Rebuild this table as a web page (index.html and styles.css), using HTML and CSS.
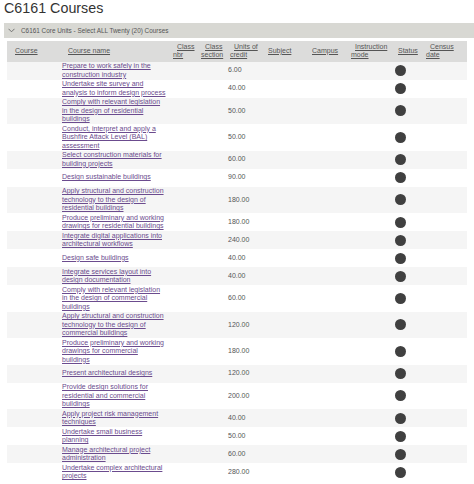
FILE: index.html
```html
<!DOCTYPE html>
<html lang="en">
<head>
<meta charset="utf-8">
<title>C6161 Courses</title>
<link rel="stylesheet" href="styles.css">
</head>
<body>
<h1 class="title">C6161 Courses</h1>
<div class="bar">
  <svg class="chev" width="7" height="5" viewBox="0 0 7 5"><polyline points="0.5,0.8 3.5,3.8 6.5,0.8" fill="none" stroke="#666" stroke-width="0.9"/></svg>
  <span>C6161 Core Units - Select ALL Twenty (20) Courses</span>
</div>
<table class="grid">
  <colgroup>
    <col class="w1"><col class="w2"><col class="w3"><col class="w4"><col class="w5">
    <col class="w6"><col class="w7"><col class="w8"><col class="w9"><col class="w10">
  </colgroup>
  <thead>
    <tr>
      <th class="h1"><a href="#">Course</a></th>
      <th class="h2"><a href="#">Course name</a></th>
      <th class="h3"><a href="#">Class<br>nbr</a></th>
      <th class="h4"><a href="#">Class<br>section</a></th>
      <th class="h5"><a href="#">Units of<br>credit</a></th>
      <th class="h6"><a href="#">Subject</a></th>
      <th class="h7"><a href="#">Campus</a></th>
      <th class="h8"><a href="#">Instruction<br>mode</a></th>
      <th class="h9"><a href="#">Status</a></th>
      <th class="h10"><a href="#">Census<br>date</a></th>
    </tr>
  </thead>
  <tbody>
    <tr><td></td><td class="name"><a href="#">Prepare to work safely in the<br>construction industry</a></td><td></td><td></td><td class="units">6.00</td><td></td><td></td><td></td><td class="status"><span class="dot"></span></td><td></td></tr>
    <tr><td></td><td class="name"><a href="#">Undertake site survey and<br>analysis to inform design process</a></td><td></td><td></td><td class="units">40.00</td><td></td><td></td><td></td><td class="status"><span class="dot"></span></td><td></td></tr>
    <tr><td></td><td class="name"><a href="#">Comply with relevant legislation<br>in the design of residential<br>buildings</a></td><td></td><td></td><td class="units">50.00</td><td></td><td></td><td></td><td class="status"><span class="dot"></span></td><td></td></tr>
    <tr><td></td><td class="name"><a href="#">Conduct, interpret and apply a<br>Bushfire Attack Level (BAL)<br>assessment</a></td><td></td><td></td><td class="units">50.00</td><td></td><td></td><td></td><td class="status"><span class="dot"></span></td><td></td></tr>
    <tr><td></td><td class="name"><a href="#">Select construction materials for<br>building projects</a></td><td></td><td></td><td class="units">60.00</td><td></td><td></td><td></td><td class="status"><span class="dot"></span></td><td></td></tr>
    <tr><td></td><td class="name"><a href="#">Design sustainable buildings</a></td><td></td><td></td><td class="units">90.00</td><td></td><td></td><td></td><td class="status"><span class="dot"></span></td><td></td></tr>
    <tr><td></td><td class="name"><a href="#">Apply structural and construction<br>technology to the design of<br>residential buildings</a></td><td></td><td></td><td class="units">180.00</td><td></td><td></td><td></td><td class="status"><span class="dot"></span></td><td></td></tr>
    <tr><td></td><td class="name"><a href="#">Produce preliminary and working<br>drawings for residential buildings</a></td><td></td><td></td><td class="units">180.00</td><td></td><td></td><td></td><td class="status"><span class="dot"></span></td><td></td></tr>
    <tr><td></td><td class="name"><a href="#">Integrate digital applications into<br>architectural workflows</a></td><td></td><td></td><td class="units">240.00</td><td></td><td></td><td></td><td class="status"><span class="dot"></span></td><td></td></tr>
    <tr><td></td><td class="name"><a href="#">Design safe buildings</a></td><td></td><td></td><td class="units">40.00</td><td></td><td></td><td></td><td class="status"><span class="dot"></span></td><td></td></tr>
    <tr><td></td><td class="name"><a href="#">Integrate services layout into<br>design documentation</a></td><td></td><td></td><td class="units">40.00</td><td></td><td></td><td></td><td class="status"><span class="dot"></span></td><td></td></tr>
    <tr><td></td><td class="name"><a href="#">Comply with relevant legislation<br>in the design of commercial<br>buildings</a></td><td></td><td></td><td class="units">60.00</td><td></td><td></td><td></td><td class="status"><span class="dot"></span></td><td></td></tr>
    <tr><td></td><td class="name"><a href="#">Apply structural and construction<br>technology to the design of<br>commercial buildings</a></td><td></td><td></td><td class="units">120.00</td><td></td><td></td><td></td><td class="status"><span class="dot"></span></td><td></td></tr>
    <tr><td></td><td class="name"><a href="#">Produce preliminary and working<br>drawings for commercial<br>buildings</a></td><td></td><td></td><td class="units">180.00</td><td></td><td></td><td></td><td class="status"><span class="dot"></span></td><td></td></tr>
    <tr><td></td><td class="name"><a href="#">Present architectural designs</a></td><td></td><td></td><td class="units">120.00</td><td></td><td></td><td></td><td class="status"><span class="dot"></span></td><td></td></tr>
    <tr><td></td><td class="name"><a href="#">Provide design solutions for<br>residential and commercial<br>buildings</a></td><td></td><td></td><td class="units">200.00</td><td></td><td></td><td></td><td class="status"><span class="dot"></span></td><td></td></tr>
    <tr><td></td><td class="name"><a href="#">Apply project risk management<br>techniques</a></td><td></td><td></td><td class="units">40.00</td><td></td><td></td><td></td><td class="status"><span class="dot"></span></td><td></td></tr>
    <tr><td></td><td class="name"><a href="#">Undertake small business<br>planning</a></td><td></td><td></td><td class="units">50.00</td><td></td><td></td><td></td><td class="status"><span class="dot"></span></td><td></td></tr>
    <tr><td></td><td class="name"><a href="#">Manage architectural project<br>administration</a></td><td></td><td></td><td class="units">60.00</td><td></td><td></td><td></td><td class="status"><span class="dot"></span></td><td></td></tr>
    <tr><td></td><td class="name"><a href="#">Undertake complex architectural<br>projects</a></td><td></td><td></td><td class="units">280.00</td><td></td><td></td><td></td><td class="status"><span class="dot"></span></td><td></td></tr>
  </tbody>
</table>
</body>
</html>
```

FILE: styles.css
```css
html, body {
  margin: 0;
  padding: 0;
  background: #ffffff;
}

body {
  font-family: "Liberation Sans", Arial, sans-serif;
  color: #333333;
}

.title {
  margin: 0 0 0 4px;
  font-size: 14.3px;
  font-weight: normal;
  line-height: 16px;
  color: #333333;
}

.bar {
  margin: 7px 0 0 4px;
  height: 14.5px;
  background: #d8d8d3;
  display: flex;
  align-items: center;
  padding-left: 4px;
  gap: 6px;
  font-size: 6.4px;
  color: #555555;
}

.chev {
  display: block;
  flex: none;
}

.grid {
  margin: 3px 0 0 7px;
  width: 460px;
  border-collapse: collapse;
  border-spacing: 0;
  table-layout: fixed;
  font-size: 7px;
}

.w1 { width: 51px; }
.w2 { width: 113px; }
.w3 { width: 26px; }
.w4 { width: 29px; }
.w5 { width: 36px; }
.w6 { width: 43px; }
.w7 { width: 42px; }
.w8 { width: 45px; }
.w9 { width: 31px; }
.w10 { width: 44px; }

.grid th {
  background: #dcdcdb;
  height: 21px;
  padding: 0;
  font-weight: normal;
  text-align: left;
  vertical-align: middle;
  line-height: 8.5px;
  text-indent: 4px;
  white-space: nowrap;
}

.grid th a {
  color: #555555;
  text-decoration: underline;
}

.h1 { padding-left: 4px !important; }
.h2 { padding-left: 6px !important; }
.h3 { padding-left: 2px !important; }
.h4 { padding-left: 4px !important; }
.h5 { padding-left: 4px !important; }
.h6 { padding-left: 2px !important; }
.h7 { padding-left: 3px !important; }
.h8 { padding-left: 4px !important; }
.h9 { padding-left: 2px !important; }
.h10 { padding-left: 3px !important; }

.grid tbody tr {
  height: 18px;
}

.grid tbody tr:nth-child(odd) td {
  background: #f5f5f5;
}

.grid td {
  padding: 0.5px 0;
  line-height: 8.5px;
  vertical-align: middle;
  white-space: nowrap;
}

.name {
  padding-left: 4px !important;
}

.name a {
  color: #6b4b8e;
  text-decoration: underline;
}

.units {
  padding-left: 2px !important;
  color: #555555;
}

.status {
  padding-left: 3px !important;
}

.dot {
  display: block;
  width: 11px;
  height: 11px;
  border-radius: 50%;
  background: #404040;
}
```
